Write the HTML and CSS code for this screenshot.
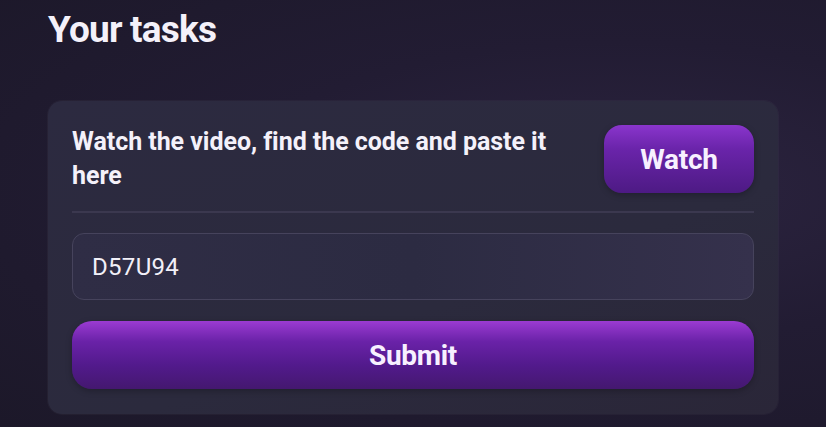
FILE: index.html
```html
<!DOCTYPE html>
<html lang="en">
<head>
    <meta charset="UTF-8">
    <meta name="viewport" content="width=device-width, initial-scale=1.0">
    <title>Your tasks</title>
    <link rel="stylesheet" href="styles.css">
</head>
<body>
    <div class="page">
        <h1 class="title">Your tasks</h1>

        <div class="task-card">
            <div class="task-head">
                <div class="task-text">Watch the video, find the code and paste it here</div>
                <button class="btn btn-watch">Watch</button>
            </div>
            <div class="divider"></div>
            <input class="code-input" type="text" value="D57U94">
            <button class="btn btn-submit">Submit</button>
        </div>
    </div>
</body>
</html>
```

FILE: styles.css
```css
* {
    margin: 0;
    padding: 0;
    box-sizing: border-box;
}

body {
    font-family: 'Roboto', 'Liberation Sans', sans-serif;
    width: 100vw;
    height: 100vh;
    overflow: hidden;
    color: #f4f1fa;
    background: radial-gradient(ellipse at 75% 45%, #2c2440 0%, #221c33 45%, #1c1829 100%);
}

.page {
    padding: 8px 48px 0 48px;
}

.title {
    font-size: 37px;
    font-weight: 700;
    letter-spacing: -0.8px;
    line-height: 44px;
    margin-bottom: 49px;
}

.task-card {
    width: 730px;
    background: linear-gradient(160deg, #2c2a40 0%, #2b2a3d 60%, #2a2638 100%);
    border-radius: 14px;
    padding: 24px 24px 25px 24px;
    display: flex;
    flex-direction: column;
    box-shadow: 0 0 0 1px rgba(255,255,255,0.03);
}

.task-head {
    display: flex;
    justify-content: space-between;
    align-items: flex-start;
    padding-bottom: 18px;
}

.task-text {
    font-size: 25px;
    font-weight: 700;
    line-height: 34px;
    letter-spacing: -0.05px;
    max-width: 500px;
}

.divider {
    height: 2px;
    background: #3b384f;
    margin-bottom: 20px;
}

.btn {
    font-family: inherit;
    border: none;
    color: #f7f0ff;
    font-weight: 700;
    cursor: pointer;
}

.btn-watch {
    width: 150px;
    height: 68px;
    border-radius: 18px;
    font-size: 28px;
    letter-spacing: -0.3px;
    background: linear-gradient(180deg, #8a35cc 0%, #6a24aa 35%, #4d1a84 100%);
    box-shadow: 0 2px 6px rgba(0,0,0,0.25);
}

.code-input {
    height: 67px;
    width: 100%;
    border-radius: 12px;
    border: 1.5px solid #46435c;
    background: linear-gradient(90deg, #2f2d45 0%, #2c2b42 50%, #35314c 100%);
    color: #f2f0f8;
    font-family: inherit;
    font-size: 24px;
    letter-spacing: 0.3px;
    padding: 0 19px;
    outline: none;
    margin-bottom: 21px;
}

.btn-submit {
    height: 68px;
    width: 100%;
    border-radius: 20px;
    font-size: 28px;
    letter-spacing: -0.3px;
    background: linear-gradient(180deg, #9b3bd2 0%, #6a22a8 30%, #521a8c 65%, #44186f 100%);
    box-shadow: 0 2px 6px rgba(0,0,0,0.25);
}
```
